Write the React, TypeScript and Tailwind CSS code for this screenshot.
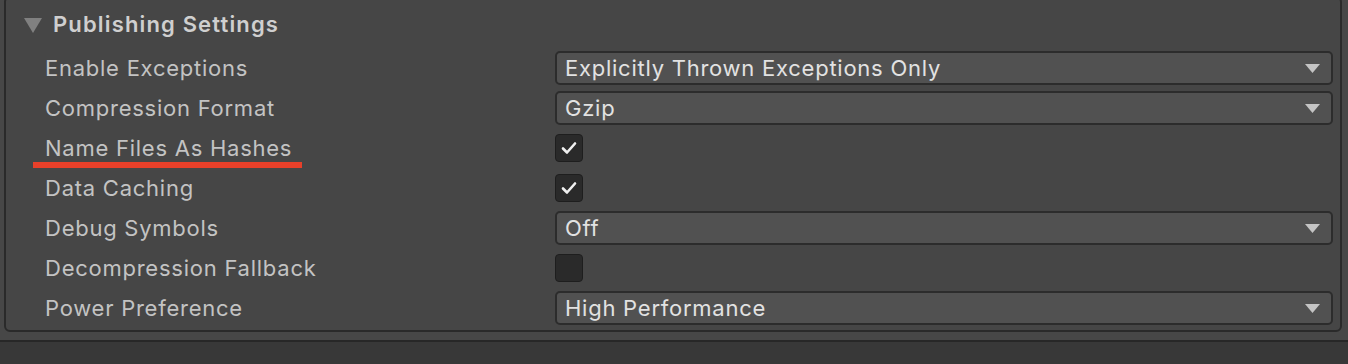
const rows: { label: string; kind: "select" | "check"; value?: string; checked?: boolean }[] = [
  { label: "Enable Exceptions", kind: "select", value: "Explicitly Thrown Exceptions Only" },
  { label: "Compression Format", kind: "select", value: "Gzip" },
  { label: "Name Files As Hashes", kind: "check", checked: true },
  { label: "Data Caching", kind: "check", checked: true },
  { label: "Debug Symbols", kind: "select", value: "Off" },
  { label: "Decompression Fallback", kind: "check", checked: false },
  { label: "Power Preference", kind: "select", value: "High Performance" },
];

const Select = ({ value }: { value?: string }) => (
  <div className="flex-1 h-[34px] flex items-center justify-between pl-[8px] pr-[11px] rounded-[5px] border-2 border-[#2c2c2c] bg-[#515151] text-[#e2e2e2]">
    <span>{value}</span>
    <svg width="15" height="9" viewBox="0 0 15 9">
      <polygon points="0,0 15,0 7.5,9" fill="#c4c4c4" />
    </svg>
  </div>
);

const Check = ({ checked }: { checked?: boolean }) => (
  <div className="w-[28px] h-[28px] rounded-[4px] border border-[#1e1e1e] bg-[#2a2a2a] flex items-center justify-center">
    {checked && (
      <svg width="16" height="14" viewBox="0 0 16 14">
        <path d="M2 7.5 L6 11.5 L14 2.5" fill="none" stroke="#f0f0f0" strokeWidth="2.6" strokeLinecap="round" strokeLinejoin="round" />
      </svg>
    )}
  </div>
);

export default function App() {
  return (
    <div className="w-[1348px] h-[364px] overflow-hidden bg-[#474747] font-['Inter','Noto_Sans',sans-serif] text-[22px] tracking-[0.75px] flex flex-col">
      {/* ===== Panel ===== */}
      <div className="relative ml-[4px] mr-[6px] mt-[-4px] rounded-[6px] border-2 border-[#2a2a2a] bg-[#464646] pb-[2px]">
        {/* Header */}
        <div className="h-[50px] flex items-center pl-[18px] pt-[3px]">
          <svg width="18" height="15" viewBox="0 0 18 15" className="mt-[1px]">
            <polygon points="0,0 18,0 9,15" fill="#808080" />
          </svg>
          <span className="ml-[11px] font-semibold tracking-[1.15px] text-[#cfcfcf]">Publishing Settings</span>
        </div>

        {/* Rows */}
        {rows.map((r) => (
          <div key={r.label} className="h-[40px] flex items-center">
            <div className="w-[549px] pl-[39px] text-[#c3c3c3]">{r.label}</div>
            {r.kind === "select" ? <Select value={r.value} /> : <Check checked={r.checked} />}
            <div className="w-[7px]" />
          </div>
        ))}

        {/* Annotation underline */}
        <div className="absolute left-[27px] top-[164px] w-[269px] h-[6px] bg-[#e8402a]" />
      </div>

      {/* ===== Footer ===== */}
      <div className="h-[8px]" />
      <div className="h-[2px] bg-[#272727]" />
      <div className="flex-1 bg-[#383838]" />
    </div>
  );
}
